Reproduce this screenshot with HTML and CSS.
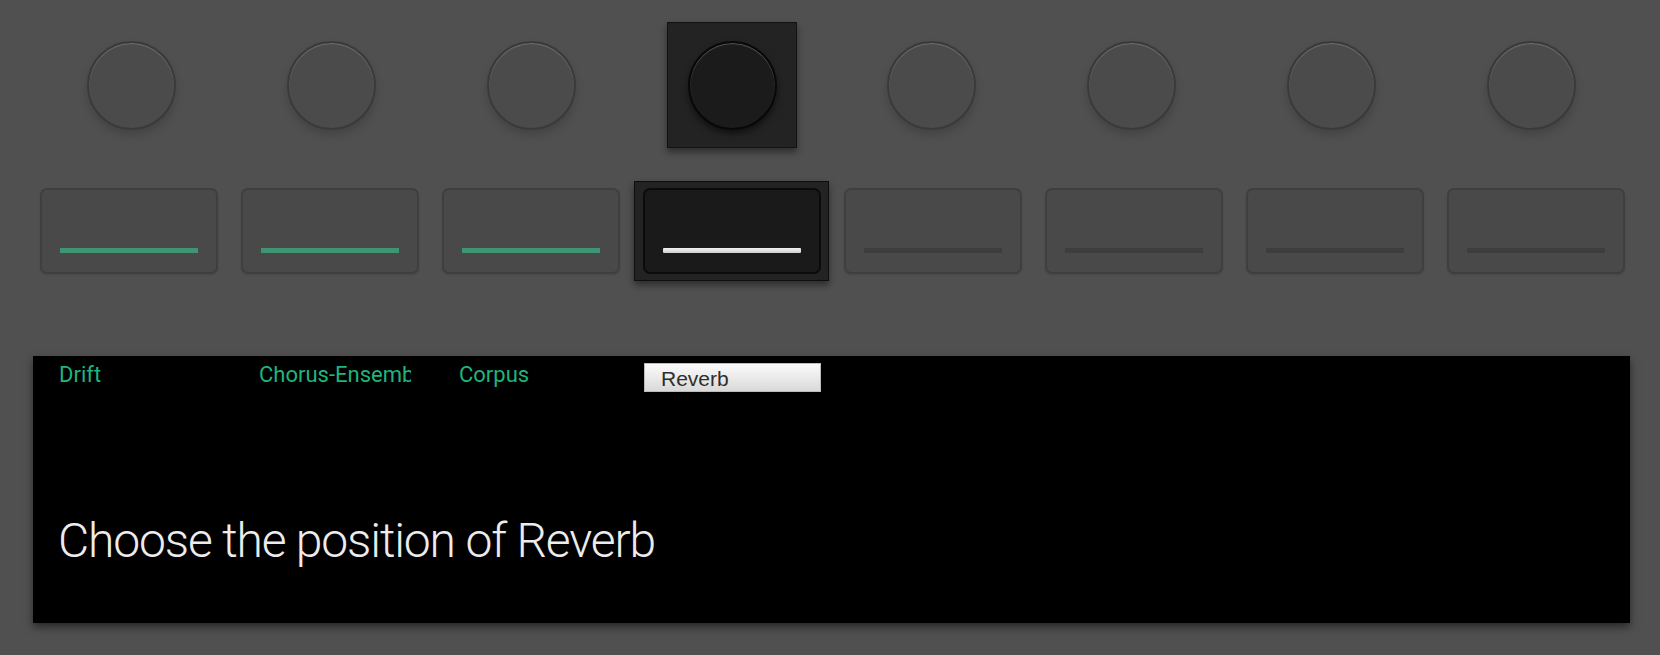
FILE: index.html
```html
<!DOCTYPE html>
<html>
<head>
<meta charset="utf-8">
<link rel="stylesheet" href="styles.css">
</head>
<body>
<div class="device">
  <div class="knob-row">
    <div class="knob-cell"><div class="knob"></div></div>
    <div class="knob-cell"><div class="knob"></div></div>
    <div class="knob-cell"><div class="knob"></div></div>
    <div class="knob-cell"><div class="knob-frame"><div class="knob selected"></div></div></div>
    <div class="knob-cell"><div class="knob"></div></div>
    <div class="knob-cell"><div class="knob"></div></div>
    <div class="knob-cell"><div class="knob"></div></div>
    <div class="knob-cell"><div class="knob"></div></div>
  </div>
  <div class="pad-row">
    <div class="pad-cell"><div class="pad"><div class="bar on"></div></div></div>
    <div class="pad-cell"><div class="pad"><div class="bar on"></div></div></div>
    <div class="pad-cell"><div class="pad"><div class="bar on"></div></div></div>
    <div class="pad-cell"><div class="pad-frame"><div class="pad selected"><div class="bar white"></div></div></div></div>
    <div class="pad-cell"><div class="pad"><div class="bar"></div></div></div>
    <div class="pad-cell"><div class="pad"><div class="bar"></div></div></div>
    <div class="pad-cell"><div class="pad"><div class="bar"></div></div></div>
    <div class="pad-cell"><div class="pad"><div class="bar"></div></div></div>
  </div>
  <div class="display">
    <div class="tabs">
      <div class="tab">Drift</div>
      <div class="tab">Chorus-Ensemble</div>
      <div class="tab">Corpus</div>
      <div class="tab active">Reverb</div>
    </div>
    <div class="message">Choose the position of Reverb</div>
  </div>
</div>
</body>
</html>
```
FILE: styles.css
```css
html, body {
  margin: 0;
  padding: 0;
}
body {
  background: #505050;
  width: 1660px;
  height: 655px;
  overflow: hidden;
  font-family: Roboto, "Liberation Sans", sans-serif;
}
.device {
  display: flex;
  flex-direction: column;
}
.knob-row {
  display: grid;
  grid-template-columns: repeat(8, 200px);
  padding-left: 31px;
  margin-top: 22px;
  height: 126px;
}
.knob-cell {
  display: flex;
  align-items: center;
  justify-content: center;
}
.knob {
  width: 85px;
  height: 85px;
  border-radius: 50%;
  background: #4b4b4b;
  border: 2px solid #3a3a3a;
  box-shadow: inset 0 1px 1px rgba(255,255,255,0.22), 0 5px 8px rgba(0,0,0,0.16);
}
.knob-frame {
  width: 128px;
  height: 124px;
  background: #232323;
  border: 1px solid #121212;
  box-shadow: 0 4px 7px rgba(0,0,0,0.45);
  display: flex;
  align-items: center;
  justify-content: center;
  margin-left: 2px;
}
.knob.selected {
  background: #1b1b1b;
  border-color: #080808;
  box-shadow: inset 0 1px 1px rgba(255,255,255,0.28), 0 4px 6px rgba(0,0,0,0.5);
}
.pad-row {
  display: grid;
  grid-template-columns: repeat(8, 201px);
  padding-left: 28px;
  margin-top: 33px;
  height: 100px;
}
.pad-cell {
  display: flex;
  align-items: center;
  justify-content: center;
}
.pad {
  box-sizing: border-box;
  width: 178px;
  height: 86px;
  background: #494949;
  border: 2px solid #3f3f3f;
  border-radius: 7px;
  display: flex;
  flex-direction: column;
  justify-content: flex-end;
  align-items: center;
  padding-bottom: 19px;
  box-shadow: 0 1px 2px rgba(0,0,0,0.12);
}
.bar {
  width: 138px;
  height: 5px;
  background: #3d3d3d;
}
.bar.on {
  background: #3f9474;
}
.bar.white {
  background: linear-gradient(#f2f2f2, #cfcfcf);
  border-radius: 1px;
}
.pad-frame {
  box-sizing: border-box;
  width: 195px;
  height: 100px;
  background: #232323;
  border: 1px solid #0e0e0e;
  box-shadow: 0 4px 7px rgba(0,0,0,0.45);
  display: flex;
  align-items: center;
  justify-content: center;
}
.pad.selected {
  background: #1a1a1a;
  border-color: #0b0b0b;
  box-shadow: none;
}
.display {
  margin: 75px 0 0 33px;
  width: 1597px;
  height: 267px;
  background: #000;
  box-shadow: 0 4px 8px rgba(0,0,0,0.5);
  box-sizing: border-box;
  padding: 7px 0 0 11px;
  display: flex;
  flex-direction: column;
}
.tabs {
  display: grid;
  grid-template-columns: repeat(4, 200px);
  height: 29px;
}
.tab {
  box-sizing: border-box;
  width: 167px;
  height: 29px;
  padding-left: 15px;
  overflow: hidden;
  white-space: nowrap;
  color: #1fb47d;
  font-size: 22px;
  line-height: 23px;
}
.tab.active {
  width: 177px;
  font-family: "Liberation Sans", Arial, sans-serif;
  font-size: 21px;
  line-height: 27px;
  padding: 1px 0 0 16px;
  color: #2e2e2e;
  background: linear-gradient(#fbfbfb, #d9d9d9);
  border: 1px solid #bcbcbc;
}
.message {
  margin: 121px 0 0 14px;
  color: #ececec;
  font-size: 48px;
  font-weight: 300;
  letter-spacing: -1.15px;
  line-height: 56px;
  white-space: nowrap;
}
```
